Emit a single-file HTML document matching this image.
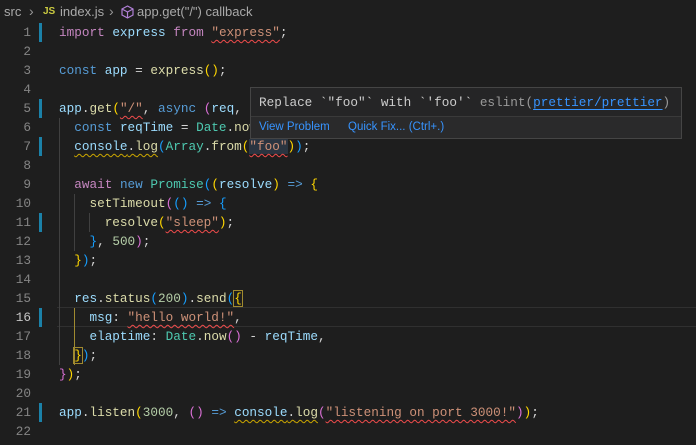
<!DOCTYPE html>
<html><head><meta charset="utf-8"><style>
*{margin:0;padding:0;box-sizing:border-box}
body{width:696px;height:445px;background:#1e1e1e;overflow:hidden;position:relative;font-family:"Liberation Mono",monospace;}
.bc{position:absolute;left:0;top:0;height:23px;width:696px;font-family:"Liberation Sans",sans-serif;font-size:13px;color:#a9a9a9;line-height:23px;white-space:nowrap}
.bc span{position:absolute;top:0}
.ln{position:absolute;left:0;width:31px;text-align:right;color:#858585;font-size:12.7px;height:19px;line-height:19px}
.code{position:absolute;left:59px;font-size:12.7px;height:19px;line-height:19px;white-space:pre;color:#d4d4d4}
.mk{position:absolute;left:39px;width:3px;height:19px;background:#1b81a8}
.g{position:absolute;width:1px;background:#404040}
.k{color:#C586C0}.v{color:#9CDCFE}.f{color:#DCDCAA}.s{color:#CE9178}.c{color:#569CD6}.t{color:#4EC9B0}.n{color:#B5CEA8}
.b1{color:#FFD700}.b2{color:#DA70D6}.b3{color:#179FFF}
.e{text-decoration:underline wavy #f14c4c;text-decoration-thickness:1px;text-underline-offset:3px}
.w{text-decoration:underline wavy #cca700;text-decoration-thickness:1px;text-underline-offset:3px}
.hov{position:absolute;left:250px;top:87px;width:432px;height:52px;background:#252526;border:1px solid #454545;font-size:12.7px}
</style></head><body>
<div class="bc">
<span style="left:4px">src</span>
<span style="left:29px;font-size:14px;color:#999">&#8250;</span>
<span style="left:43px;color:#cbcb41;font-weight:bold;font-size:10px">JS</span>
<span style="left:60px">index.js</span>
<span style="left:109px;font-size:14px;color:#999">&#8250;</span>
<svg style="position:absolute;left:121px;top:5px" width="13" height="14" viewBox="0 0 13 14"><path d="M6.5 1 L12 4 L12 10 L6.5 13 L1 10 L1 4 Z M1 4 L6.5 7 L12 4 M6.5 7 L6.5 13" fill="none" stroke="#b180d7" stroke-width="1.2"/></svg>
<span style="left:137px">app.get("/") callback</span>
</div>

<div style="position:absolute;left:57px;top:307px;width:639px;height:20px;border-top:1px solid #303030;border-bottom:1px solid #303030"></div>

<div class="g" style="left:59px;top:118px;height:247px"></div>
<div class="g" style="left:74px;top:194px;height:57px"></div>
<div class="g" style="left:89px;top:213px;height:19px"></div>
<div style="position:absolute;left:74px;top:308px;width:1px;height:57px;background:#a08a30"></div>

<div class="mk" style="top:23px"></div>
<div class="mk" style="top:99px"></div>
<div class="mk" style="top:137px"></div>
<div class="mk" style="top:213px"></div>
<div class="mk" style="top:308px"></div>
<div class="mk" style="top:403px"></div>

<div class="ln" style="top:23px">1</div><div class="ln" style="top:42px">2</div><div class="ln" style="top:61px">3</div><div class="ln" style="top:80px">4</div><div class="ln" style="top:99px">5</div><div class="ln" style="top:118px">6</div><div class="ln" style="top:137px">7</div><div class="ln" style="top:156px">8</div><div class="ln" style="top:175px">9</div><div class="ln" style="top:194px">10</div><div class="ln" style="top:213px">11</div><div class="ln" style="top:232px">12</div><div class="ln" style="top:251px">13</div><div class="ln" style="top:270px">14</div><div class="ln" style="top:289px">15</div><div class="ln" style="top:308px;color:#c6c6c6">16</div><div class="ln" style="top:327px">17</div><div class="ln" style="top:346px">18</div><div class="ln" style="top:365px">19</div><div class="ln" style="top:384px">20</div><div class="ln" style="top:403px">21</div><div class="ln" style="top:422px">22</div>

<div class="code" style="top:23px"><span class="k">import</span> <span class="v">express</span> <span class="k">from</span> <span class="s e">"express"</span>;</div>
<div class="code" style="top:61px"><span class="c">const</span> <span class="v">app</span> = <span class="f">express</span><span class="b1">()</span>;</div>
<div class="code" style="top:99px"><span class="v">app</span>.<span class="f">get</span><span class="b1">(</span><span class="s e">"/"</span>, <span class="c">async</span> <span class="b2">(</span><span class="v">req</span>, <span class="v">res</span><span class="b2">)</span> <span class="c">=&gt;</span> <span class="b2">{</span></div>
<div class="code" style="top:118px">  <span class="c">const</span> <span class="v">reqTime</span> = <span class="t">Date</span>.<span class="f">now</span><span class="b3">()</span>;</div>
<div class="code" style="top:137px">  <span class="v w">console</span><span class="w">.</span><span class="f w">log</span><span class="b3">(</span><span class="t">Array</span>.<span class="f">from</span><span class="b1">(</span><span class="s e" style="background:#2a3440">"foo"</span><span class="b1">)</span><span class="b3">)</span>;</div>
<div class="code" style="top:175px">  <span class="k">await</span> <span class="c">new</span> <span class="t">Promise</span><span class="b3">(</span><span class="b1">(</span><span class="v">resolve</span><span class="b1">)</span> <span class="c">=&gt;</span> <span class="b1">{</span></div>
<div class="code" style="top:194px">    <span class="f">setTimeout</span><span class="b2">(</span><span class="b3">()</span> <span class="c">=&gt;</span> <span class="b3">{</span></div>
<div class="code" style="top:213px">      <span class="f">resolve</span><span class="b1">(</span><span class="s e">"sleep"</span><span class="b1">)</span>;</div>
<div class="code" style="top:232px">    <span class="b3">}</span>, <span class="n">500</span><span class="b2">)</span>;</div>
<div class="code" style="top:251px">  <span class="b1">}</span><span class="b3">)</span>;</div>
<div class="code" style="top:289px">  <span class="v">res</span>.<span class="f">status</span><span class="b3">(</span><span class="n">200</span><span class="b3">)</span>.<span class="f">send</span><span class="b3">(</span><span class="b1" style="outline:1px solid #a08a30">{</span></div>
<div class="code" style="top:308px">    <span class="v">msg</span>: <span class="s e">"hello world!"</span>,</div>
<div class="code" style="top:327px">    <span class="v">elaptime</span>: <span class="t">Date</span>.<span class="f">now</span><span class="b2">()</span> - <span class="v">reqTime</span>,</div>
<div class="code" style="top:346px">  <span class="b1" style="outline:1px solid #a08a30">}</span><span class="b3">)</span>;</div>
<div class="code" style="top:365px"><span class="b2">}</span><span class="b1">)</span>;</div>
<div class="code" style="top:403px"><span class="v">app</span>.<span class="f">listen</span><span class="b1">(</span><span class="n">3000</span>, <span class="b2">()</span> <span class="c">=&gt;</span> <span class="v w">console</span><span class="w">.</span><span class="f w">log</span><span class="b2">(</span><span class="s e">"listening on port 3000!"</span><span class="b2">)</span><span class="b1">)</span>;</div>

<div class="hov">
<div style="position:absolute;left:8px;top:7px;white-space:pre;color:#cccccc;line-height:15px">Replace `"foo"` with `'foo'` <span style="color:#9a9a9a">eslint(<span style="color:#3794ff;text-decoration:underline;text-underline-offset:3px">prettier/prettier</span>)</span></div>
<div style="position:absolute;left:0;top:28px;width:430px;height:22px;background:#2a2a2b;border-top:1px solid #3a3a3a;font-family:'Liberation Sans',sans-serif;font-size:11.5px;color:#3794ff;line-height:21px;white-space:nowrap">
<span style="position:absolute;left:8px">View Problem</span><span style="position:absolute;left:97px">Quick Fix... (Ctrl+.)</span></div>
</div>
</body></html>
